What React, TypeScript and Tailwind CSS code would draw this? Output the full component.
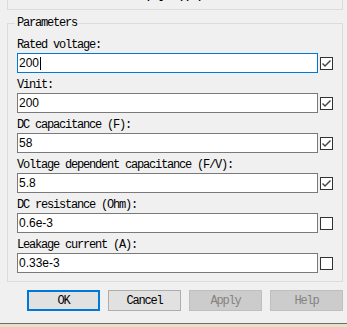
import React from 'react';

const mono = { fontFamily: '"Liberation Mono", "DejaVu Sans Mono", monospace' };
const sans = { fontFamily: '"Liberation Sans", Arial, sans-serif' };

type Param = { label: string; value: string; checked: boolean; focused?: boolean };

const params: Param[] = [
  { label: 'Rated voltage:', value: '200', checked: true, focused: true },
  { label: 'Vinit:', value: '200', checked: true },
  { label: 'DC capacitance (F):', value: '58', checked: true },
  { label: 'Voltage dependent capacitance (F/V):', value: '5.8', checked: true },
  { label: 'DC resistance (Ohm):', value: '0.6e-3', checked: false },
  { label: 'Leakage current (A):', value: '0.33e-3', checked: false },
];

const CheckBox = ({ checked }: { checked: boolean }) => (
  <div className="w-[13px] h-[13px] border border-[#333333] bg-white flex items-center justify-center shrink-0">
    {checked && (
      <svg width="11" height="11" viewBox="0 0 11 11">
        <polyline points="1.5,5.5 4,8 9.5,2.5" fill="none" stroke="#4a4a4a" strokeWidth="1.5" />
      </svg>
    )}
  </div>
);

const ParamRow = ({ p }: { p: Param }) => (
  <div className="flex flex-col">
    <div className="h-[12px] leading-[12px] text-[12px] tracking-[-1.2px] text-black mb-[2px] whitespace-pre" style={mono}>
      {p.label}
    </div>
    <div className="flex items-center gap-[2px]">
      <div
        className={`w-[301px] h-[20px] bg-white border flex items-center pl-[1px] text-[12px] text-black ${
          p.focused ? 'border-[#0078d7]' : 'border-[#7a7a7a]'
        }`}
        style={sans}
      >
        <span>{p.value}</span>
        {p.focused && <span className="w-px h-[13px] bg-black ml-[1px]"></span>}
      </div>
      <CheckBox checked={p.checked} />
    </div>
  </div>
);

const Btn = ({ label, variant }: { label: string; variant: 'default' | 'normal' | 'disabled' }) => {
  const cls =
    variant === 'default'
      ? 'bg-[#e1e1e1] border-2 border-[#0078d7] text-black'
      : variant === 'normal'
      ? 'bg-[#e1e1e1] border border-[#adadad] text-black'
      : 'bg-[#cccccc] border border-[#bfbfbf] text-[#838383]';
  return (
    <button
      className={`w-[73px] h-[21px] flex items-center justify-center text-[12px] tracking-[-1.2px] ${cls}`}
      style={mono}
    >
      {label}
    </button>
  );
};

export default function App() {
  return (
    <div className="w-[347px] h-[327px] bg-[#f0f0f0] overflow-hidden flex flex-col">
      {/* Upper panel, mostly scrolled out of view */}
      <div className="ml-[7px] w-[336px] h-[10px] border-x border-b border-[#dcdcdc] shrink-0">
        <div className="h-[2px] overflow-hidden pl-[133px]">
          <div className="-mt-[8px] leading-[10px] text-[10px] font-bold text-black whitespace-pre" style={mono}>
            {'_p j  qq q'}
          </div>
        </div>
      </div>

      {/* Parameters group */}
      <fieldset className="ml-[7px] mt-[7px] w-[336px] border border-[#dcdcdc] pt-[10px] pb-[8px] px-[9px] shrink-0">
        <legend
          className="-ml-[2px] px-[2px] h-[12px] leading-[12px] text-[12px] tracking-[-1.2px] text-black"
          style={mono}
        >
          Parameters
        </legend>
        <div className="flex flex-col gap-[6px]">
          {params.map((p) => (
            <ParamRow key={p.label} p={p} />
          ))}
        </div>
      </fieldset>

      {/* Buttons */}
      <div className="flex justify-end gap-[8px] pr-[4px] mt-[8px] shrink-0">
        <Btn label="OK" variant="default" />
        <Btn label="Cancel" variant="normal" />
        <Btn label="Apply" variant="disabled" />
        <Btn label="Help" variant="disabled" />
      </div>

      <div className="mt-auto h-px bg-[#6e6e6e] shrink-0"></div>
      <div className="h-[3px] bg-[#e2e2c4] shrink-0"></div>
    </div>
  );
}
